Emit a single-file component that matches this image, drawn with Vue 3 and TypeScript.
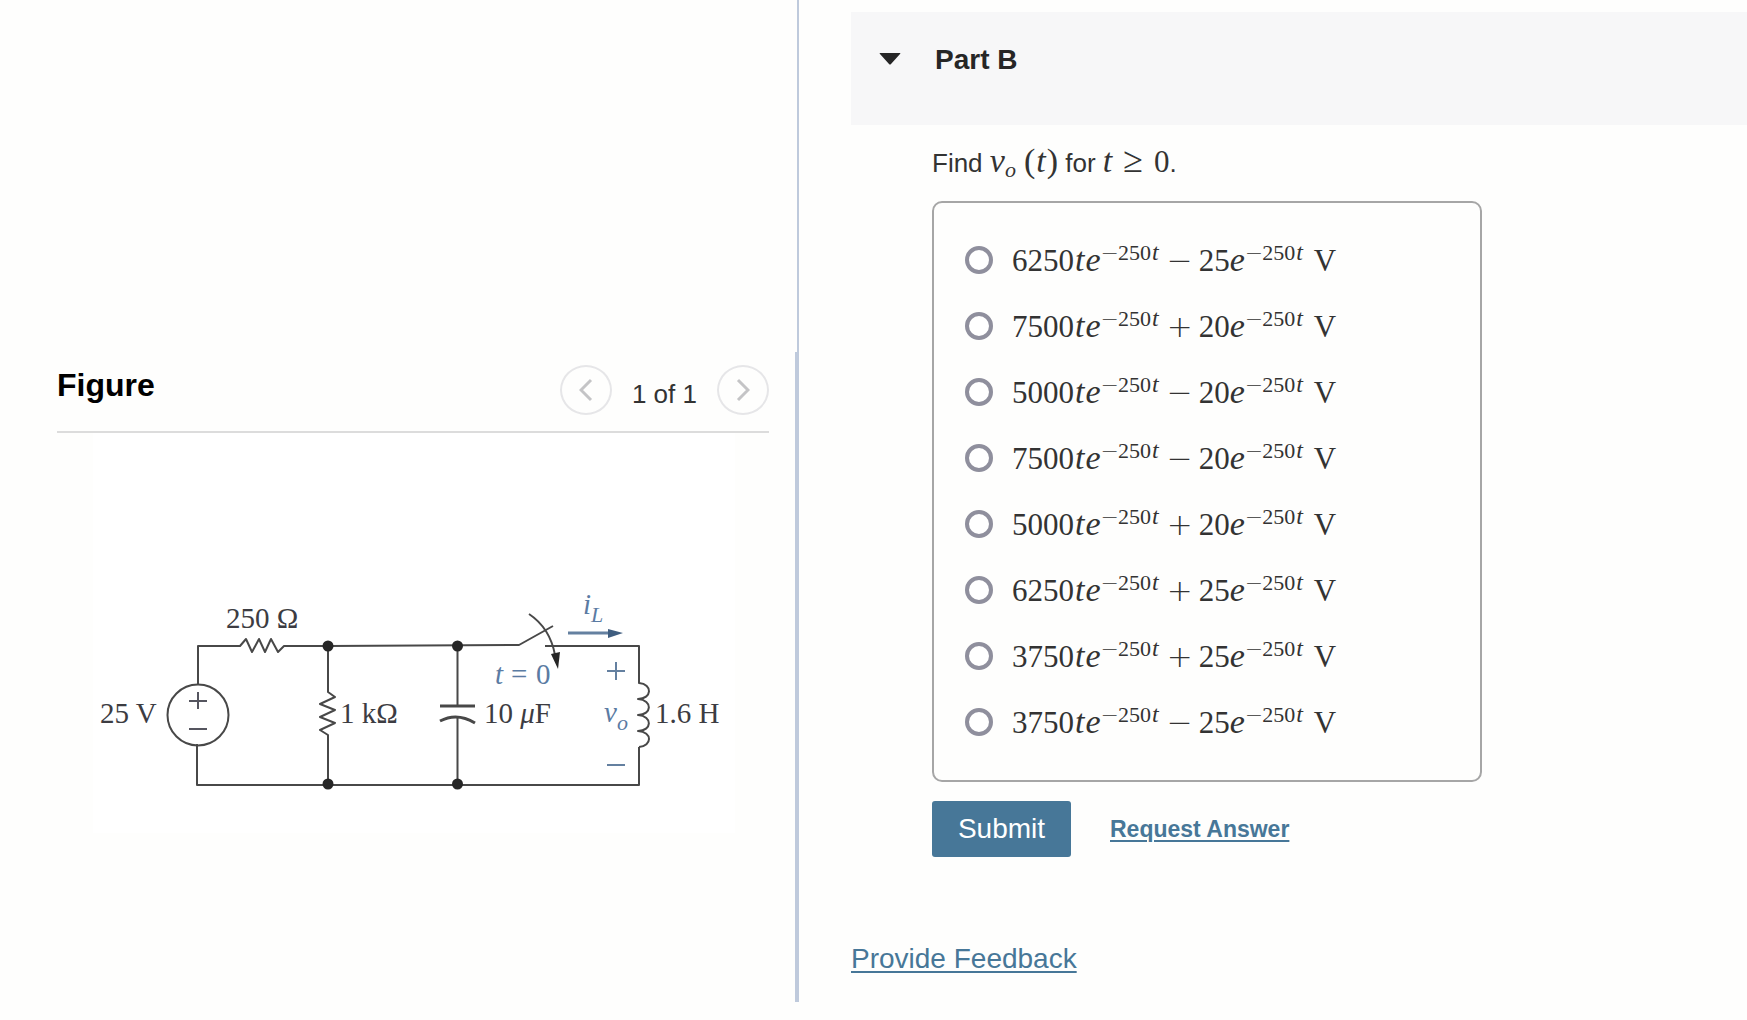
<script setup lang="ts">
import { ref } from 'vue'

interface Choice {
  id: string
  lead: string
  op: '+' | '−'
  tail: string
}

const choices: Choice[] = [
  { id: 'a', lead: '6250', op: '−', tail: '25' },
  { id: 'b', lead: '7500', op: '+', tail: '20' },
  { id: 'c', lead: '5000', op: '−', tail: '20' },
  { id: 'd', lead: '7500', op: '−', tail: '20' },
  { id: 'e', lead: '5000', op: '+', tail: '20' },
  { id: 'f', lead: '6250', op: '+', tail: '25' },
  { id: 'g', lead: '3750', op: '+', tail: '25' },
  { id: 'h', lead: '3750', op: '−', tail: '25' },
]

const selected = ref<string>('')
const open = ref<boolean>(true)
</script>

<template>
  <div class="page">
    <aside class="left">
      <div class="upper"></div>
      <section class="figure">
        <header class="figure-head">
          <h2>Figure</h2>
          <nav class="pager">
            <button type="button" class="round" aria-label="Previous figure">
              <svg width="14" height="24" viewBox="0 0 14 24"><path d="M12 2L2 12L12 22" /></svg>
            </button>
            <span>1 of 1</span>
            <button type="button" class="round" aria-label="Next figure">
              <svg width="14" height="24" viewBox="0 0 14 24"><path d="M2 2L12 12L2 22" /></svg>
            </button>
          </nav>
        </header>
        <svg class="circuit" viewBox="93 433 642 400" role="img" aria-label="RLC circuit">
          <g class="wire">
            <path d="M198 684V646H240L246 639L252 652L259 639L265 652L271 639L278 652L284 646H328L519 645L553 626" />
            <path d="M197 744V785H639V747" />
            <circle cx="198" cy="715" r="30.5" />
            <path d="M328 646V692L335 697L320 704L335 710L320 717L335 723L320 730L328 735V785" />
            <path d="M457.500 646V705M457.500 717V785" />
            <path d="M440 706H475" stroke-width="3" />
            <path d="M440 721Q457 712 475 723" stroke-width="3" />
            <path d="M545 646H639V683C653 684 652 699 638 699C653 700 652 715 638 715C653 716 652 731 638 731C653 732 652 746 639 747" />
            <path d="M529 614Q550 628 555 655" />
          </g>
          <g class="dots">
            <circle cx="328" cy="646" r="5.500" />
            <circle cx="328" cy="784" r="5.500" />
            <circle cx="457.500" cy="646" r="5.500" />
            <circle cx="457.500" cy="784" r="5.500" />
            <path d="M551 654L560 652L558 669Z" />
          </g>
          <path class="polarity" d="M189 701H207M198 692V709M189 729H207" />
          <g class="blue-line">
            <path d="M568 633H609" stroke-width="3" />
            <path d="M608 629L623 633L608 638Z" fill="#3f5d7f" stroke="none" />
            <path d="M607 671H625M616 662V680M607 765H625" />
          </g>
          <g class="labels">
            <text x="226" y="628">250 Ω</text>
            <text x="100" y="723">25 V</text>
            <text x="340" y="723">1 kΩ</text>
            <text x="484" y="723">10 <tspan class="it">μ</tspan>F</text>
            <text x="655" y="723">1.6 H</text>
          </g>
          <g class="labels blue">
            <text class="it" x="583" y="614">i<tspan class="small" dy="8">L</tspan></text>
            <text x="495" y="684"><tspan class="it">t</tspan></text>
            <text x="511" y="684">=</text>
            <text x="536" y="684">0</text>
            <text class="it" x="604" y="722">v<tspan class="small" dy="8">o</tspan></text>
          </g>
        </svg>
      </section>
    </aside>

    <main class="right">
      <header class="part-head">
        <button type="button" class="toggle" aria-label="Toggle Part B" @click="open = !open">
          <svg width="22" height="12" viewBox="0 0 22 12"><path d="M1 0H21Q22 0 21 1L12 11Q11 12 10 11L1 1Q0 0 1 0Z" /></svg>
        </button>
        <h1>Part B</h1>
      </header>

      <form v-if="open" class="question" @submit.prevent>
        <p class="prompt">
          Find
          <span class="math"><i>v</i><sub>o</sub><b class="paren open">(</b><i class="t">t</i><b class="paren">)</b></span>
          for
          <span class="math"><i>t</i><span class="rel">≥</span>0</span>.
        </p>

        <div class="choices" role="radiogroup" aria-label="Answer choices">
          <div v-for="c in choices" :key="c.id" class="choice">
            <input :id="'choice-' + c.id" v-model="selected" type="radio" name="answer" :value="c.id" />
            <label :for="'choice-' + c.id" class="math">
              <span>{{ c.lead }}</span><i class="t">t</i><i class="e">e</i><sup><span class="sym">−</span>250<i>t</i></sup><span class="sym op">{{ c.op }}</span><span>{{ c.tail }}</span><i class="e">e</i><sup><span class="sym">−</span>250<i>t</i></sup><span class="unit">V</span>
            </label>
          </div>
        </div>

        <div class="actions">
          <button type="submit" class="submit">Submit</button>
          <a href="#" class="request">Request Answer</a>
        </div>
      </form>

      <a href="#" class="feedback">Provide Feedback</a>
    </main>
  </div>
</template>

<style>
body {
  background: #fefefd;
}
</style>

<style scoped>
.page {
  display: grid;
  grid-template-columns: 799fr 948fr;
  min-height: 100vh;
  color: #333;
  font-family: "Liberation Sans", Arial, sans-serif;
  font-size: 26px;
}
h1,
h2,
p {
  margin: 0;
}
button {
  font-family: inherit;
  cursor: pointer;
}
.left {
  min-width: 0;
}
.upper {
  height: 352px;
  border-right: 2px solid #bfcadc;
}
.figure {
  box-sizing: border-box;
  min-height: 650px;
  padding: 0 26px 0 57px;
  border-right: 4px solid #bfcadc;
}
.figure-head {
  display: flex;
  justify-content: space-between;
  height: 79px;
  border-bottom: 2px solid #dcdcdc;
}
.figure-head h2 {
  padding-top: 14px;
  color: #000;
  font-size: 32px;
  line-height: 38px;
}
.pager {
  display: flex;
  gap: 20px;
  padding-top: 13px;
}
.pager span {
  padding-top: 14px;
  line-height: 30px;
}
.round {
  display: flex;
  align-items: center;
  justify-content: center;
  width: 52px;
  height: 50px;
  padding: 0;
  border: 2px solid #e6e6e8;
  border-radius: 50%;
  background: none;
}
.round svg {
  fill: none;
  stroke: #c4c4c6;
  stroke-width: 3;
}
.circuit {
  display: block;
  width: calc(100% - 70px);
  margin-left: 36px;
  background: #fff;
}
.wire {
  fill: none;
  stroke: #484848;
  stroke-width: 2;
  stroke-linejoin: round;
}
.dots {
  fill: #262626;
}
.polarity {
  stroke: #55555f;
  stroke-width: 2;
}
.blue-line {
  stroke: #6480a0;
  stroke-width: 2;
}
.labels {
  fill: #3c3c42;
  font-family: "Liberation Serif", "Times New Roman", serif;
  font-size: 29px;
}
.blue {
  fill: #5b7ba3;
}
.it {
  font-style: italic;
}
.small {
  font-size: 22px;
}
.right {
  min-width: 0;
  padding: 12px 0 0 52px;
}
.part-head {
  box-sizing: border-box;
  display: flex;
  gap: 34px;
  height: 113px;
  padding: 31px 0 0 28px;
  background: #f7f7f8;
}
.part-head h1 {
  color: #262626;
  font-size: 28px;
  line-height: 34px;
}
.toggle {
  display: flex;
  align-items: center;
  height: 32px;
  padding: 0;
  border: 0;
  background: none;
  fill: #262626;
}
.question {
  padding-left: 81px;
}
.prompt {
  height: 76px;
  line-height: 72px;
  white-space: nowrap;
}
.math {
  font-family: "Liberation Serif", "Times New Roman", serif;
  font-size: 31px;
  white-space: nowrap;
}
.math i {
  font-size: 34px;
}
.math sub,
.math sup {
  position: relative;
  font-size: 22px;
  line-height: 0;
  vertical-align: baseline;
}
.math sub {
  top: 5px;
  font-style: italic;
}
.math sup {
  top: -11px;
}
.math sup i {
  margin-left: 1px;
  font-size: 24px;
}
.paren {
  font-size: 34px;
  font-weight: 400;
}
.open {
  margin-left: 8px;
}
.sym {
  font-family: "DejaVu Sans Light", "DejaVu Sans", sans-serif;
  font-weight: 200;
}
.math sup .sym {
  margin-right: -1px;
}
.op {
  margin: 0 6px 0 8px;
}
.rel {
  margin: 0 11px;
  font-size: 36px;
  line-height: 0;
}
.choices {
  box-sizing: border-box;
  width: 550px;
  max-width: 100%;
  padding: 24px 31px 25px;
  border: 2px solid #a6a6a6;
  border-radius: 10px;
}
.choice {
  display: flex;
  align-items: center;
  gap: 19px;
  height: 66px;
}
.choice input {
  appearance: none;
  box-sizing: border-box;
  width: 28px;
  height: 28px;
  margin: 0;
  border: 4px solid #8f8f9d;
  border-radius: 50%;
  background: #fff;
}
.choice input:checked {
  background: radial-gradient(#477798 50%, #fff 55%);
}
.choice label {
  line-height: 66px;
}
.t {
  margin: 0 1px;
}
.unit {
  margin-left: 11px;
}
.actions {
  display: flex;
  align-items: center;
  gap: 39px;
  margin-top: 19px;
}
.submit {
  width: 139px;
  height: 56px;
  padding: 0;
  border: 0;
  border-radius: 3px;
  background: #477798;
  color: #fff;
  font-size: 28px;
}
a {
  color: #477798;
  text-decoration-thickness: 2px;
  text-underline-offset: 3px;
}
.request {
  font-size: 23px;
  font-weight: 700;
}
.feedback {
  display: inline-block;
  margin-top: 86px;
  font-size: 28px;
  line-height: 32px;
}
</style>
